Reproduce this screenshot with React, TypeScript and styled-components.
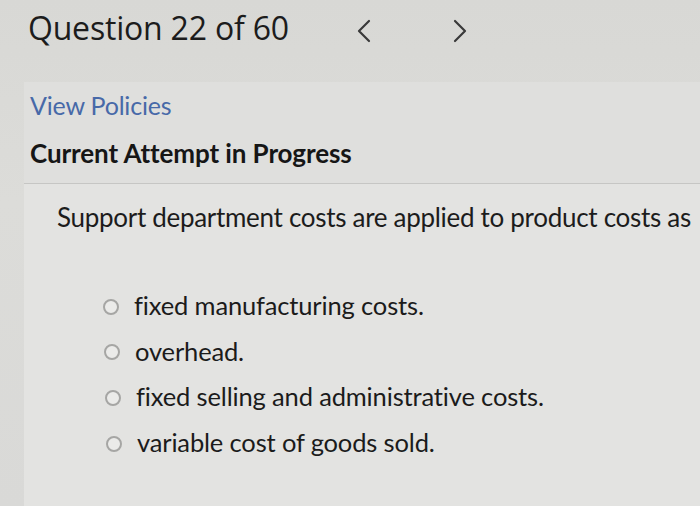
import React from 'react';
import styled, { createGlobalStyle } from 'styled-components';

const Global = createGlobalStyle`
  html, body { margin: 0; padding: 0; }
  body {
    width: 700px;
    height: 506px;
    overflow: hidden;
    background: #d6d6d3;
    font-family: Lato, "Open Sans", sans-serif;
    color: #1d1d1d;
  }
`;

const Page = styled.div`
  width: 700px;
  height: 506px;
  display: flex;
  flex-direction: column;
  background: linear-gradient(180deg, #d8d8d5 0%, #dcdcd9 40%, #d9d9d7 100%);
`;

const Header = styled.div`
  height: 82px;
  display: flex;
  align-items: flex-start;
  padding: 6px 0 0 28px;
  box-sizing: border-box;
`;

const Title = styled.h1`
  margin: 0;
  font-family: "Open Sans", sans-serif;
  font-weight: 400;
  font-size: 32px;
  letter-spacing: -0.2px;
  color: #1c1c1c;
`;

const NavButton = styled.button<{ $left: number }>`
  border: none;
  background: none;
  padding: 0;
  margin-left: ${p => p.$left}px;
  margin-top: 12px;
  width: 18px;
  height: 26px;
  display: flex;
  align-items: center;
  justify-content: center;
  cursor: pointer;
`;

const Panel = styled.div`
  flex: 1;
  margin-left: 24px;
  background: #dfdfdd;
  display: flex;
  flex-direction: column;
`;

const PolicyLink = styled.a`
  margin: 8px 0 0 6px;
  font-size: 25px;
  line-height: 30px;
  color: #4769a8;
  text-decoration: none;
  letter-spacing: -0.2px;
`;

const Attempt = styled.div`
  margin: 18px 0 0 6px;
  font-size: 26px;
  line-height: 31px;
  font-weight: 700;
  letter-spacing: -0.1px;
  color: #161616;
`;

const Divider = styled.hr`
  margin: 14px 0 0;
  border: none;
  border-top: 1.5px solid #c6c6c4;
`;

const Question = styled.div`
  flex: 1;
  background: #e3e3e1;
  padding: 18px 0 0 33px;
`;

const Prompt = styled.p`
  margin: 0;
  font-size: 26px;
  line-height: 31px;
  letter-spacing: -0.3px;
  white-space: nowrap;
  color: #1c1c1c;
`;

const Options = styled.div`
  margin-top: 56px;
  padding-left: 46px;
  display: flex;
  flex-direction: column;
  gap: 12.7px;
`;

const Option = styled.label<{ $shift: number }>`
  display: flex;
  align-items: center;
  gap: 15px;
  padding-left: ${p => p.$shift}px;
  font-size: 25.5px;
  line-height: 33px;
  letter-spacing: -0.15px;
  height: 33px;
  color: #1b1b1b;
`;

const Radio = styled.span`
  width: 12px;
  height: 12px;
  border-radius: 50%;
  border: 2px solid #a6a6a4;
  background: #ebebe9;
  flex-shrink: 0;
  margin-top: 2px;
`;

const Chevron = ({ dir }: { dir: 'left' | 'right' }) => (
  <svg width="18" height="26" viewBox="0 0 18 26" fill="none">
    <path
      d={dir === 'left' ? 'M14 3 L4 13 L14 23' : 'M4 3 L14 13 L4 23'}
      stroke="#3a3a3a"
      strokeWidth="2.2"
      strokeLinecap="round"
      strokeLinejoin="round"
    />
  </svg>
);

const options = [
  { text: 'fixed manufacturing costs.', shift: 0 },
  { text: 'overhead.', shift: 1 },
  { text: 'fixed selling and administrative costs.', shift: 2 },
  { text: 'variable cost of goods sold.', shift: 3 },
];

export default function App() {
  return (
    <Page>
      <Global />
      <Header>
        <Title>Question 22 of 60</Title>
        <NavButton $left={66}>
          <Chevron dir="left" />
        </NavButton>
        <NavButton $left={78}>
          <Chevron dir="right" />
        </NavButton>
      </Header>
      <Panel>
        <PolicyLink href="#">View Policies</PolicyLink>
        <Attempt>Current Attempt in Progress</Attempt>
        <Divider />
        <Question>
          <Prompt>Support department costs are applied to product costs as</Prompt>
          <Options>
            {options.map((o, idx) => (
              <Option key={idx} $shift={o.shift}>
                <Radio />
                {o.text}
              </Option>
            ))}
          </Options>
        </Question>
      </Panel>
    </Page>
  );
}
